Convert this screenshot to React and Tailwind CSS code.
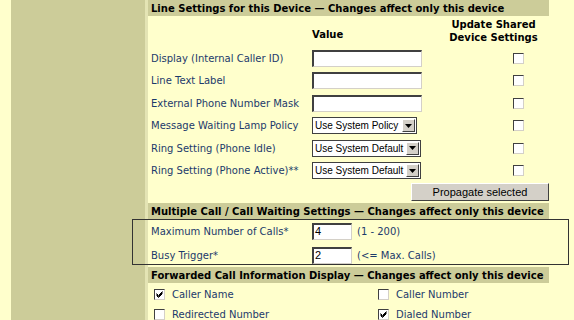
import { useState } from 'react'

const labelCls = 'text-[#1c3a6b]'

function Checkbox({ checked }) {
    return (
        <div className="w-[11px] h-[11px] bg-white border-t border-l border-[#404040] border-r border-b border-r-[#d4d0c8] border-b-[#d4d0c8] flex items-center justify-center">
            {checked && (
                <svg width="9" height="9" viewBox="0 0 9 9">
                    <path d="M1.5 3.5 L3.5 5.5 L7.5 1.5 M1.5 4.5 L3.5 6.5 L7.5 2.5 M1.5 5.5 L3.5 7.5 L7.5 3.5" stroke="#000" strokeWidth="1" fill="none" />
                </svg>
            )}
        </div>
    )
}

function TextBox({ width, value }) {
    return (
        <div
            className="h-[17px] bg-white border-t-2 border-l-2 border-[#404040] border-r border-b border-r-[#d4d0c8] border-b-[#d4d0c8] flex items-center pl-[1px] text-[11px] text-black font-['Liberation_Sans',sans-serif]"
            style={{ width }}
        >
            {value}
        </div>
    )
}

function Select({ text, width }) {
    return (
        <div
            className="h-[17px] bg-white border border-[#404040] flex items-center overflow-hidden font-['Liberation_Sans',sans-serif] text-[10px] text-black"
            style={{ width }}
        >
            <span className="flex-1 pl-[2px] whitespace-nowrap overflow-hidden">{text}</span>
            <div className="w-[13px] h-[13px] mr-[1px] bg-[#d4d0c8] border-t border-l border-white border-r border-b border-r-[#404040] border-b-[#404040] flex items-center justify-center">
                <svg width="7" height="4" viewBox="0 0 7 4"><path d="M0 0 H7 L3.5 4 Z" fill="#000" /></svg>
            </div>
        </div>
    )
}

function SectionHeader({ children }) {
    return (
        <div className="h-[16px] bg-[#cccc99] flex items-center pl-[3px] font-bold text-black whitespace-nowrap">
            {children}
        </div>
    )
}

function App() {
    const [rows] = useState([
        { label: 'Display (Internal Caller ID)', type: 'text' },
        { label: 'Line Text Label', type: 'text' },
        { label: 'External Phone Number Mask', type: 'text' },
        { label: 'Message Waiting Lamp Policy', type: 'select', text: 'Use System Policy', width: 105 },
        { label: 'Ring Setting (Phone Idle)', type: 'select', text: 'Use System Default', width: 109 },
        { label: 'Ring Setting (Phone Active)**', type: 'select', text: 'Use System Default', width: 109 },
    ])

    return (
        <div className="relative w-[574px] h-[320px] overflow-hidden flex bg-[#ffffcc] font-['DejaVu_Sans',sans-serif] text-[10px]">
            <div className="w-[11px] bg-[#ffffcc]"></div>
            <div className="w-[134px] bg-[#cccc99]"></div>
            <div className="w-[3px] bg-[#e4e4b4]"></div>
            <div className="w-[401px]">
                <SectionHeader>Line Settings for this Device — Changes affect only this device</SectionHeader>

                {/* column headings */}
                <div className="h-[31px] flex font-bold text-black">
                    <div className="w-[164px]"></div>
                    <div className="w-[140px] pt-[11px]">Value</div>
                    <div className="w-[83px] pt-[2px] leading-[13px] flex flex-col items-center whitespace-nowrap">
                        <span>Update Shared</span>
                        <span>Device Settings</span>
                    </div>
                </div>

                {rows.map((r, i) => (
                    <div key={i} className={`${i % 2 ? 'h-[23px]' : 'h-[22px]'} flex items-center`}>
                        <div className={`w-[164px] pl-[3px] whitespace-nowrap ${labelCls}`}>{r.label}</div>
                        <div className="w-[140px]">
                            {r.type === 'text' ? <TextBox width={110} /> : <Select text={r.text} width={r.width} />}
                        </div>
                        <div className="w-[97px] flex pl-[61px]">
                            <Checkbox />
                        </div>
                    </div>
                ))}

                <div className="h-[21px] flex justify-end pt-[1px]">
                    <button className="w-[138px] h-[18px] bg-[#d4d0c8] border-t border-l border-white border-r border-b border-r-[#404040] border-b-[#404040] font-['Liberation_Sans',sans-serif] text-[11px] text-black">
                        Propagate selected
                    </button>
                </div>

                <SectionHeader>Multiple Call / Call Waiting Settings — Changes affect only this device</SectionHeader>
                <div className="h-[24px] flex items-center">
                    <div className={`w-[164px] pl-[3px] ${labelCls}`}>Maximum Number of Calls*</div>
                    <TextBox width={40} value="4" />
                    <span className={`ml-[5px] ${labelCls}`}>(1 - 200)</span>
                </div>
                <div className="h-[24px] flex items-center">
                    <div className={`w-[164px] pl-[3px] ${labelCls}`}>Busy Trigger*</div>
                    <TextBox width={40} value="2" />
                    <span className={`ml-[5px] ${labelCls}`}>(&lt;= Max. Calls)</span>
                </div>

                <SectionHeader>Forwarded Call Information Display — Changes affect only this device</SectionHeader>
                <div className="h-[22px] flex items-center">
                    <div className="w-[230px] flex items-center pl-[6px] gap-[7px]">
                        <Checkbox checked />
                        <span className={labelCls}>Caller Name</span>
                    </div>
                    <div className="flex items-center gap-[7px]">
                        <Checkbox />
                        <span className={labelCls}>Caller Number</span>
                    </div>
                </div>
                <div className="h-[19px] flex items-center">
                    <div className="w-[230px] flex items-center pl-[6px] gap-[7px]">
                        <Checkbox />
                        <span className={labelCls}>Redirected Number</span>
                    </div>
                    <div className="flex items-center gap-[7px]">
                        <Checkbox checked />
                        <span className={labelCls}>Dialed Number</span>
                    </div>
                </div>
            </div>

            {/* outline around the call waiting section */}
            <div className="absolute left-[132px] top-[219px] w-[437px] h-[46px] border border-[#333333] pointer-events-none"></div>
        </div>
    )
}

export default App
